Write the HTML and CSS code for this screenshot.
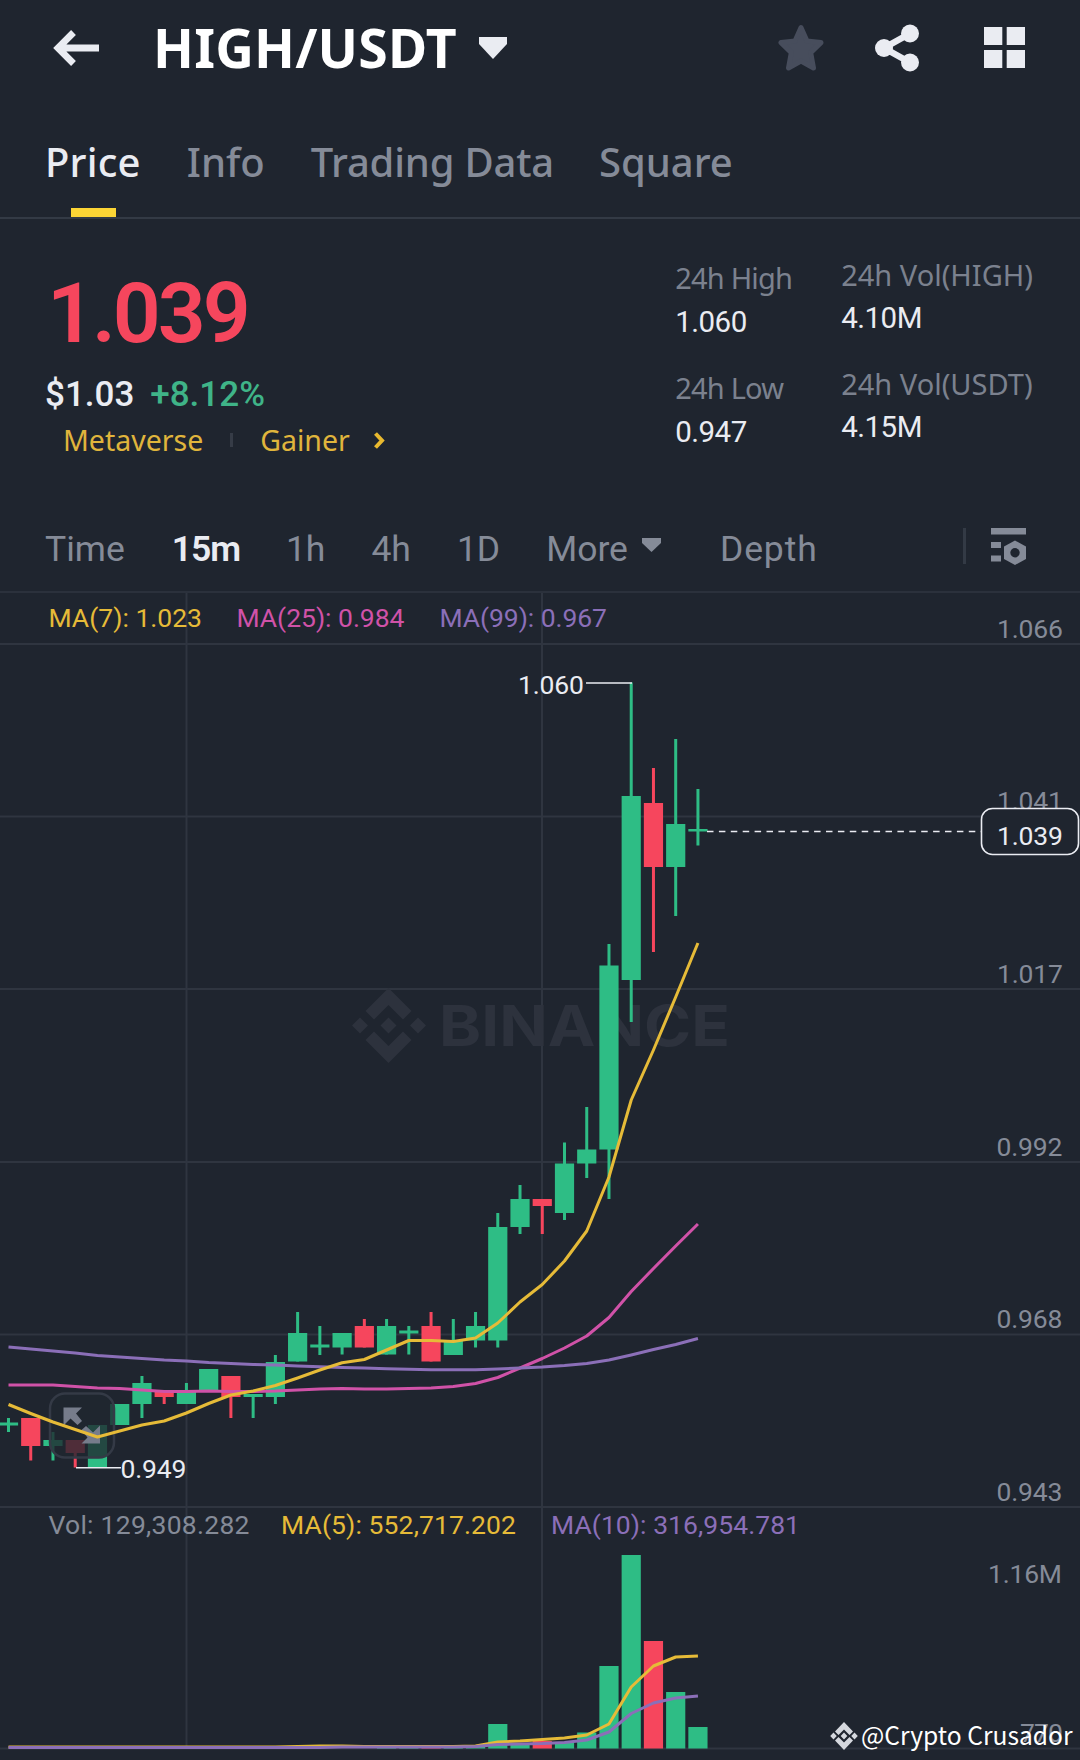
FILE: index.html
```html
<!DOCTYPE html>
<html lang="en">
<head>
    <meta charset="UTF-8">
    <meta name="viewport" content="width=device-width, initial-scale=1.0">
    <title>HIGH/USDT</title>
    <link rel="stylesheet" href="styles.css">
</head>
<body>
    <!-- top bar -->
    <div class="header">
        <svg class="back" width="46" height="36" viewBox="0 0 46 36">
            <path d="M20.5 2.5L5 18l15.500 15.500M5 18h41" fill="none" stroke="#eaecf2" stroke-width="6.800"/>
        </svg>
        <h1>HIGH/USDT</h1>
        <svg width="28" height="22" viewBox="0 0 28 22"><path d="M0 0h28v7L14 22 0 7z" fill="#eaecf2"/></svg>
        <div class="actions">
            <svg width="46" height="48" viewBox="0 0 46 48">
                <path d="M23 3.500l6 13.500 14 1.600-10.300 10 2.800 15.400L23 37l-12.500 7 2.800-15.400L3 18.600 17 17z" fill="#474d5c" stroke="#474d5c" stroke-width="5" stroke-linejoin="round"/>
            </svg>
            <svg width="44" height="48" viewBox="0 0 44 48">
                <path d="M35 9.500L9 24l26 14.500" fill="none" stroke="#eaecf2" stroke-width="6.500"/>
                <circle cx="9" cy="24" r="9" fill="#eaecf2"/>
                <circle cx="35" cy="9.500" r="9" fill="#eaecf2"/>
                <circle cx="35" cy="38.500" r="9" fill="#eaecf2"/>
            </svg>
            <svg width="41" height="41" viewBox="0 0 41 41">
                <path d="M0 0h18.300v18H0zM22.700 0H41v18H22.700zM0 23h18.300v18H0zM22.700 23H41v18H22.700z" fill="#eaecf2"/>
            </svg>
        </div>
    </div>

    <div class="tabs">
        <span class="active">Price</span>
        <span>Info</span>
        <span class="data">Trading Data</span>
        <span>Square</span>
    </div>

    <!-- price and 24h numbers -->
    <div class="summary">
        <div class="quote">
            <div class="last">1.039</div>
            <div class="change"><span>$1.03</span><span class="up">+8.12%</span></div>
            <div class="tags">
                <span>Metaverse</span><i></i><span>Gainer</span>
                <svg width="11" height="17" viewBox="0 0 11 17"><path d="M1.500 1.500l6.500 7-6.500 7" fill="none" stroke="#e8b92f" stroke-width="4"/></svg>
            </div>
        </div>
        <div class="stats">
            <dl class="col1">
                <dt>24h High</dt><dd>1.060</dd>
                <dt>24h Low</dt><dd>0.947</dd>
            </dl>
            <dl>
                <dt>24h Vol(HIGH)</dt><dd>4.10M</dd>
                <dt>24h Vol(USDT)</dt><dd>4.15M</dd>
            </dl>
        </div>
    </div>

    <div class="periods">
        <span>Time</span>
        <span class="active">15m</span>
        <span>1h</span>
        <span>4h</span>
        <span>1D</span>
        <span class="more">More <svg width="19" height="14" viewBox="0 0 19 14"><path d="M0 0h19v5l-9.500 9L0 5z" fill="#858b98"/></svg></span>
        <span class="depth">Depth</span>
        <div class="settings">
            <i></i>
            <svg width="35" height="37" viewBox="0 0 35 37">
                <path d="M0 0h35v6.500H0zM0 14h10v6H0zM0 27.500h10v6H0z" fill="#858b98"/>
                <path d="M24 12.500l11 6v12.500l-11 6-11-6V18.500z" fill="#858b98"/>
                <circle cx="24" cy="24.800" r="4.700" fill="#1f252f"/>
            </svg>
        </div>
    </div>

    <svg class="chart" id="chart" width="1080" height="1167" viewBox="0 593 1080 1167">
        <g id="grid"></g>

        <!-- logo behind the candles -->
        <g class="mark">
            <path d="M388.500 988l23 23-8.500 8.500-14.500-14.500-14.500 14.500-8.500-8.500zM388.500 1063l23-23-8.500-8.500-14.500 14.500-14.500-14.500-8.500 8.500zM388.500 1017.500l8 8-8 8-8-8zM360 1017.500l8 8-8 8-8-8zM418 1017.500l8 8-8 8-8-8z"/>
            <text x="439" y="1046" textLength="291" lengthAdjust="spacingAndGlyphs">BINANCE</text>
        </g>

        <g id="candles"></g>
        <g id="volumes"></g>

        <!-- expand button -->
        <g>
            <rect x="50" y="1393.500" width="64" height="64" rx="15" fill="#20262f" fill-opacity=".78" stroke="#343a46" stroke-width="2.500"/>
            <path d="M63.500 1407.500h18.500l-6 6 6 7.500-4.500 4-7-6.500-7 7z" fill="#767c8b"/>
            <path d="M100 1443.500H81.500l6-6-6-7.500 4.500-4 7 6.500 7-7z" fill="#767c8b"/>
        </g>

        <g id="lines"></g>

        <g id="legend"></g>
        <g id="axis"></g>

        <!-- high / low pointers -->
        <path d="M586 683h46M76 1467.700h45" stroke="#eaecf2" stroke-width="1.600"/>
        <text class="white" x="518" y="693.500" textLength="66">1.060</text>
        <text class="white" x="120.500" y="1477.500" textLength="66">0.949</text>

        <!-- last price -->
        <path d="M707 831.500h274" stroke="#eaecf2" stroke-width="1.600" stroke-dasharray="6.500 5.400"/>
        <rect x="981.500" y="808.500" width="97" height="46" rx="11" fill="#1f252f" stroke="#eaecf2" stroke-width="1.600"/>
        <text class="white" x="997" y="844.500" textLength="66">1.039</text>

        <g fill="#d5d8de">
            <path d="M844 1722l9 9.500-3.500 3.500-5.500-5.500-5.500 5.500-3.500-3.500zM844 1750l9-9.500-3.500-3.500-5.500 5.500-5.500-5.500-3.500 3.500zM844 1732.500l3.300 3.500-3.300 3.500-3.300-3.500zM833.500 1732.500l3.300 3.500-3.300 3.500-3.300-3.500zM854.500 1732.500l3.300 3.500-3.300 3.500-3.300-3.500z"/>
        </g>
        <text class="author" x="861" y="1745" textLength="211.500" lengthAdjust="spacingAndGlyphs">@Crypto Crusador</text>
    </svg>

    <script>
        var green = "#2ebd85"
        var red = "#f6465d"
        var yellow = "#e6bb38"
        var pink = "#d052a8"
        var purple = "#8b6fb8"

        // x of a candle by its index
        function cx(i){
            return 8.5 + 22.24 * i
        }

        // color, high, body top, body bottom, low
        var candles = [
            ["g",1418,1422.500,1425.500,1432], ["r",1418,1418,1446,1460.500], ["g",1432,1440,1446,1460.500], ["r",1440,1440,1453,1467.500],
            ["g",1425,1425,1467.500,1467.500], ["g",1404,1404,1425,1425], ["g",1376,1383,1404,1418], ["r",1390,1390,1397,1404],
            ["g",1383,1391,1404,1404], ["g",1369,1369,1390,1390], ["r",1376,1376,1397,1418], ["g",1394,1394,1397,1418],
            ["g",1355,1362,1397,1404], ["g",1312,1333,1361.500,1361.500], ["g",1326,1344.500,1347.500,1355], ["g",1333,1333,1347.500,1354.500],
            ["r",1319,1326,1347.500,1347.500], ["g",1319,1326,1354.500,1354.500], ["g",1326,1330.500,1333.500,1354.500], ["r",1312,1326,1361.500,1361.500],
            ["g",1319,1340,1355,1355], ["g",1312,1326,1340.500,1347.500], ["g",1213,1227,1340.500,1347.500], ["g",1185,1199,1227,1234],
            ["r",1199,1199,1206,1234], ["g",1142.500,1163.500,1213,1220], ["g",1107,1149.500,1163.500,1178], ["g",944,965.500,1149.500,1199],
            ["g",682.500,796,980,1022], ["r",768,803,867,952], ["g",739,824,867,916], ["g",789,829,831.500,845.500]
        ]

        // index of the candle : top of its volume bar
        var volumes = {17:1747.500, 18:1747.500, 19:1747, 20:1747, 21:1746.500, 22:1724, 23:1743.500, 24:1741, 25:1743, 26:1732.500, 27:1666, 28:1555, 29:1641, 30:1692, 31:1727}

        var averages = [
            [pink, [1385,1385,1385,1386.500,1388,1388.500,1390,1391.500,1391.500,1391,1391.500,1391.500,1391,1390,1389,1388.500,1389,1389,1388.500,1388,1386.500,1383.500,1377.500,1368,1358.500,1348,1336,1317.500,1291.500,1268.500,1246,1224]],
            [purple, [1347,1349,1351,1353,1355.500,1357,1358.500,1360,1361,1362.500,1363.500,1364.500,1365,1366,1366.800,1367.500,1368,1368.700,1369.200,1369.700,1369.800,1369.700,1369,1368,1367,1365.500,1363.500,1360,1355,1349.500,1344.500,1338.500]],
            [yellow, [1404.500,1413.500,1422,1429.500,1437,1431,1425,1421,1413,1403.500,1395,1391,1385.500,1378,1370,1362.700,1359.500,1350,1340.500,1340.500,1341.500,1338,1323,1302,1284.500,1261,1231,1177,1100,1050,997,943]],
            [yellow, [1747,1747,1747,1747,1747,1747,1747,1747,1747,1747,1747,1747,1747,1746.500,1746,1746,1746.500,1746.500,1746.500,1746.500,1746.500,1746,1742,1741,1739.500,1738,1735,1724,1687,1666,1657,1656]],
            [purple, [1747.500,1747.500,1747.500,1747.500,1747.500,1747.500,1747.500,1747.500,1747.500,1747.500,1747.500,1747.500,1747.500,1747.500,1747.500,1747,1747,1747,1747,1747,1747,1746.500,1744.500,1744,1743.500,1742.500,1740,1732,1713.500,1703,1698,1696]]
        ]

        // text, x, y, width, color
        var legend = [
            ["MA(7): 1.023",48.500,626.500,153.500,yellow], ["MA(25): 0.984",236.500,626.500,168,pink], ["MA(99): 0.967",439.500,626.500,167.500,purple],
            ["Vol: 129,308.282",48.500,1533.500,201,"#858b98"], ["MA(5): 552,717.202",281,1533.500,235,yellow], ["MA(10): 316,954.781",551,1533.500,249,purple]
        ]
        var axis = [
            ["1.066",997,637.500,66], ["1.041",997,810,66], ["1.017",997,982.500,66], ["0.992",996.500,1155.500,66],
            ["0.968",996.500,1327.500,66], ["0.943",996.500,1500.500,66], ["1.16M",988,1582.500,74], ["770",1020,1742,43]
        ]

        function bar(x,y,w,h,color){
            return '<rect x="'+x+'" y="'+y+'" width="'+w+'" height="'+h+'" fill="'+color+'"/>'
        }
        function label(arr,color){
            return '<text x="'+arr[1]+'" y="'+arr[2]+'" textLength="'+arr[3]+'" fill="'+color+'">'+arr[0]+'</text>'
        }

        var grid = ""
        var rows = [643,815.500,988,1161,1333.500,1506,1747.500]
        for (var i =0;i<rows.length;i++){
            grid += bar(0,rows[i],1080,2,"#2f3540")
        }
        grid += bar(185.500,593,2,1156,"#2f3540") + bar(541,593,2,1156,"#2f3540")
        document.getElementById("grid").innerHTML = grid

        var body = ""
        var vols = ""
        for (var i =0;i<candles.length;i++){
            var c = candles[i]
            var color = c[0] == "g" ? green : red
            body += bar(cx(i)-1.5,c[1],3,c[4]-c[1],color)
            body += bar(cx(i)-9.6,c[2],19.2,c[3]-c[2],color)
            if(volumes[i]){
                vols += bar(cx(i)-9.6,volumes[i],19.2,1748.500-volumes[i],color)
            }
        }
        document.getElementById("candles").innerHTML = body
        document.getElementById("volumes").innerHTML = vols

        var lines = ""
        for (var i =0;i<averages.length;i++){
            var points = averages[i][1].map(function(y,k){
                return cx(k)+","+y
            }).join(" ")
            lines += '<polyline points="'+points+'" stroke="'+averages[i][0]+'"/>'
        }
        document.getElementById("lines").innerHTML = lines

        document.getElementById("legend").innerHTML = legend.map(function(t){
            return label(t,t[4])
        }).join("")
        document.getElementById("axis").innerHTML = axis.map(function(t){
            return label(t,"#858b98")
        }).join("")
    </script>
</body>
</html>
```
FILE: styles.css
```css
*{
    margin: 0;
    padding: 0;
    box-sizing: border-box;
}
body{
    width: 1080px;
    height: 1760px;
    overflow: hidden;
    background-color: #1f252f;
    color: #eaecf2;
    font-family: "Noto Sans", sans-serif;
}
svg{
    display: block;
}
.header{
    display: flex;
    align-items: center;
    height: 95px;
    padding: 0 55px 0 53px;
}
.header h1{
    width: 303px;
    margin: 0 23px 0 54px;
    color: #fff;
    font-size: 53.5px;
    font-weight: 700;
    line-height: 60px;
    letter-spacing: .2px;
    white-space: nowrap;
}
.actions{
    display: flex;
    align-items: center;
    gap: 51px;
    margin-left: auto;
}
.actions svg:last-child{
    margin-left: 14px;
}
.tabs{
    display: flex;
    gap: 46px;
    height: 124px;
    padding: 11px 0 0 45px;
    border-bottom: 2px solid #333a45;
    color: #858b98;
    font-size: 40px;
    font-weight: 500;
    line-height: 111px;
}
.tabs .active{
    position: relative;
    color: #eaecf2;
    letter-spacing: .2px;
}
.tabs .active::after{
    content: "";
    position: absolute;
    left: 26px;
    bottom: 0;
    width: 45px;
    height: 9px;
    background-color: #fcd535;
}
.tabs .data{
    margin-right: -1px;
    letter-spacing: -.2px;
}
.summary{
    display: flex;
    justify-content: space-between;
    height: 288px;
    padding-right: 47px;
}
.quote{
    padding: 53px 0 0 45px;
}
.last{
    padding-left: 2px;
    color: #f6465d;
    font: 600 84px/84px Roboto, sans-serif;
    letter-spacing: -3px;
}
.change{
    display: flex;
    gap: 16px;
    margin-top: 19px;
    font: 500 35px/40px Roboto, sans-serif;
}
.up{
    color: #3fb488;
}
.tags{
    display: flex;
    align-items: center;
    margin: 7px 0 0 18px;
    color: #e0b53c;
    font-size: 28.5px;
    line-height: 36px;
}
.tags i{
    width: 3px;
    height: 14px;
    margin: 0 27px;
    background-color: #363c47;
}
.tags svg{
    margin-left: 24px;
}
.stats{
    display: flex;
    padding-top: 37px;
}
.stats .col1{
    width: 166px;
    padding-top: 3px;
}
.stats dt{
    color: #7b818e;
    font-size: 29px;
    line-height: 38px;
}
.stats .col1 dt{
    letter-spacing: -.8px;
}
.stats dd{
    margin: 5px 0 28px;
    color: #eaecf2;
    font: 400 29.5px/38px Roboto, sans-serif;
    letter-spacing: -.5px;
}
.stats .col1 dd{
    margin: 6px 0 28px;
}
.periods{
    display: flex;
    align-items: center;
    gap: 46px;
    height: 86px;
    padding: 0 54px 0 45px;
    border-bottom: 2px solid #2b313c;
    color: #858b98;
    font: 400 35.5px/40px Roboto, sans-serif;
}
.periods .active{
    margin-left: 1px;
    color: #eaecf2;
    font-weight: 600;
    letter-spacing: -1.1px;
}
.more{
    display: flex;
    align-items: center;
    gap: 14px;
    margin-right: 13px;
}
.more svg{
    margin-bottom: 8px;
}
.depth{
    letter-spacing: .9px;
}
.settings{
    display: flex;
    align-items: center;
    gap: 25px;
    margin: 0 0 6px auto;
}
.settings i{
    width: 3px;
    height: 36px;
    background-color: #333a45;
}
.chart text{
    font: 400 26.5px Roboto, sans-serif;
}
.chart .white{
    fill: #eaecf2;
}
.chart polyline{
    fill: none;
    stroke-width: 3;
    stroke-linejoin: round;
}
.mark{
    fill: #2d323d;
}
.chart .mark text{
    font: 700 57px Inter, sans-serif;
}
.chart .author{
    fill: #fff;
    font: 400 25px "Noto Sans CJK SC", sans-serif;
}
```
